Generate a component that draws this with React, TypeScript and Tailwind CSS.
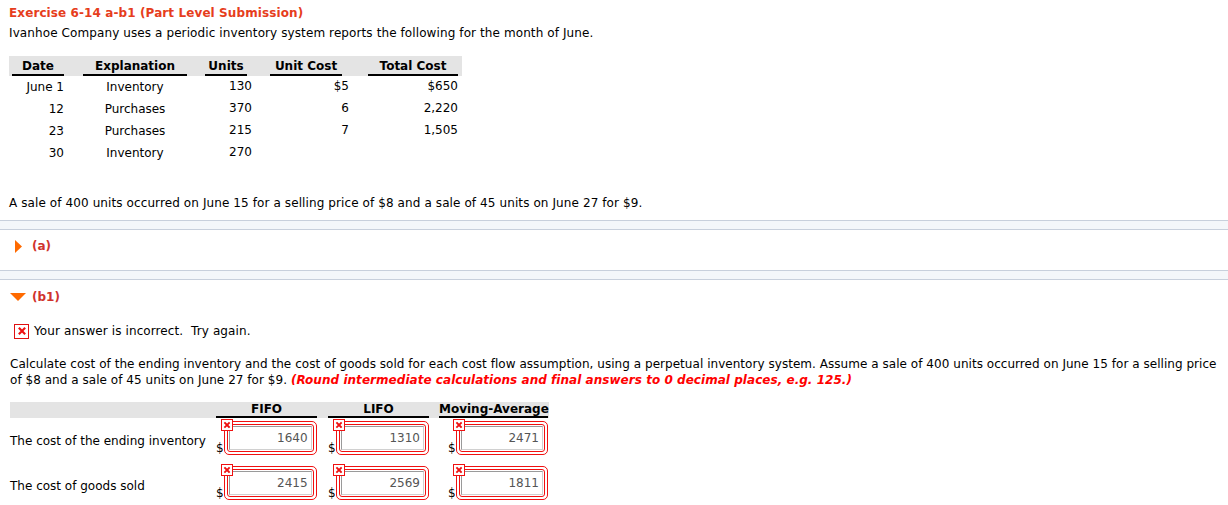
import React from "react";

const rows = [
  { date: "June 1", exp: "Inventory", units: "130", unit: "$5", total: "$650" },
  { date: "12", exp: "Purchases", units: "370", unit: "6", total: "2,220" },
  { date: "23", exp: "Purchases", units: "215", unit: "7", total: "1,505" },
  { date: "30", exp: "Inventory", units: "270", unit: "", total: "" },
];

function XMark({ size }: { size: number }) {
  return (
    <svg width={size} height={size} viewBox="0 0 10 10" className="block">
      <path d="M3 3 L7 7 M7 3 L3 7" stroke="#ee1111" strokeWidth="1.8" strokeLinecap="square" />
    </svg>
  );
}

function AnswerBox({ value, width }: { value: string; width: string }) {
  return (
    <div className="flex items-end">
      <span className="leading-none text-[12px] pb-[1px]">$</span>
      <div className={`relative ${width}`}>
        <div className="h-[34px] rounded-[5px] border border-[#f01010] p-[2px] bg-white">
          <div className="h-full rounded-[3px] border border-[#f01010] p-[1px]">
            <div className="h-full border border-t-[#9a9a9a] border-l-[#9a9a9a] border-b-[#d0d0d0] border-r-[#d0d0d0] flex items-center justify-end pr-[3px] text-[#555] text-[12px]">
              {value}
            </div>
          </div>
        </div>
        <div className="absolute -left-[3px] -top-[2px] w-[12px] h-[12px] bg-white border border-[#f01010] flex items-center justify-center">
          <XMark size={10} />
        </div>
      </div>
    </div>
  );
}

export default function App() {
  return (
    <div className="w-[1228px] h-[505px] bg-white text-black text-[12px] font-['DejaVu_Sans','Verdana',sans-serif] overflow-hidden">
      <div className="px-[9px] pt-[3px] tracking-[0.1px]">
        <h1 className="font-bold text-[#e63d1c] leading-[20px]">Exercise 6-14 a-b1 (Part Level Submission)</h1>
        <p className="leading-[20px]">Ivanhoe Company uses a periodic inventory system reports the following for the month of June.</p>

        <div className="mt-[13px] tracking-normal">
          <div className="flex w-[453px] h-[20px] bg-[#e4e4e4] font-bold">
            <div className="ml-[3px] w-[52px] text-center border-b-2 border-black leading-[18px] pt-[1px]">Date</div>
            <div className="ml-[19px] w-[104px] text-center border-b-2 border-black leading-[18px] pt-[1px]">Explanation</div>
            <div className="ml-[18px] w-[42px] text-center border-b-2 border-black leading-[18px] pt-[1px]">Units</div>
            <div className="ml-[23px] w-[72px] text-center border-b-2 border-black leading-[18px] pt-[1px]">Unit Cost</div>
            <div className="ml-[26px] w-[90px] text-center border-b-2 border-black leading-[18px] pt-[1px]">Total Cost</div>
          </div>
          {rows.map((r) => (
            <div key={r.date} className="flex h-[22px] items-center">
              <div className="w-[55px] text-right">{r.date}</div>
              <div className="ml-[19px] w-[104px] text-center">{r.exp}</div>
              <div className="ml-[18px] w-[47px] text-right -mt-[3px]">{r.units}</div>
              <div className="ml-[18px] w-[79px] text-right -mt-[3px]">{r.unit}</div>
              <div className="ml-[19px] w-[90px] text-right -mt-[3px]">{r.total}</div>
            </div>
          ))}
        </div>

        <p className="mt-[29px] leading-[20px]">
          A sale of 400 units occurred on June 15 for a selling price of $8 and a sale of 45 units on June 27 for $9.
        </p>
      </div>

      <div className="mt-[7px] h-[10px] border-y border-[#c8d0dc] bg-[#f4f7fa]" />

      <div className="h-[40px] pt-[6px] px-[15px] flex items-start">
        <div className="flex items-center h-[20px]">
          <svg width="7" height="13" viewBox="0 0 7 13" className="block">
            <path d="M0 0 L7 6.5 L0 13 Z" fill="#ff6a00" />
          </svg>
          <span className="ml-[10px] font-bold text-[#d0332c] leading-[20px]">(a)</span>
        </div>
      </div>

      <div className="h-[10px] border-y border-[#c8d0dc] bg-[#f4f7fa]" />

      <div className="pt-[7px] px-[10px]">
        <div className="flex items-center h-[20px]">
          <svg width="16" height="8" viewBox="0 0 16 8" className="block">
            <path d="M0 0 L16 0 L8 8 Z" fill="#ff6a00" />
          </svg>
          <span className="ml-[6px] font-bold text-[#d0332c] leading-[20px]">(b1)</span>
        </div>

        <div className="mt-[14px] flex items-center h-[20px] pl-[4px]">
          <div className="w-[15px] h-[15px] border border-[#e01010] flex items-center justify-center">
            <XMark size={12} />
          </div>
          <span className="ml-[5px] tracking-[0.1px]">Your answer is incorrect.&nbsp; Try again.</span>
        </div>

        <p className="mt-[15px] leading-[16px] tracking-[0.04px]">
          <span className="block whitespace-nowrap">
            Calculate cost of the ending inventory and the cost of goods sold for each cost flow assumption, using a perpetual inventory system. Assume a sale of 400 units occurred on June 15 for a selling price
          </span>
          <span className="block whitespace-nowrap">
            of $8 and a sale of 45 units on June 27 for $9.{" "}
            <span className="font-bold italic text-[#ff0000]">
              (Round intermediate calculations and final answers to 0 decimal places, e.g. 125.)
            </span>
          </span>
        </p>

        <div className="mt-[14px]">
          <div className="flex w-[539px] h-[16px] bg-[#e4e4e4] font-bold leading-[14px] whitespace-nowrap">
            <div className="ml-[206px] w-[101px] text-center border-b-2 border-black">FIFO</div>
            <div className="ml-[11px] w-[101px] text-center border-b-2 border-black">LIFO</div>
            <div className="ml-[10px] w-[109px] text-center border-b-2 border-black">Moving-Average</div>
          </div>

          {[
            { label: "The cost of the ending inventory", vals: ["1640", "1310", "2471"] },
            { label: "The cost of goods sold", vals: ["2415", "2569", "1811"] },
          ].map((row) => (
            <div key={row.label} className="flex h-[45px]">
              <div className="w-[206px] pt-[15px] leading-[16px]">{row.label}</div>
              <div className="w-[101px] pt-[3px]">
                <AnswerBox value={row.vals[0]} width="w-[93px]" />
              </div>
              <div className="ml-[11px] w-[101px] pt-[3px]">
                <AnswerBox value={row.vals[1]} width="w-[96px]" />
              </div>
              <div className="ml-[10px] w-[109px] pt-[3px] pl-[9px]">
                <AnswerBox value={row.vals[2]} width="w-[93px]" />
              </div>
            </div>
          ))}
        </div>
      </div>
    </div>
  );
}
